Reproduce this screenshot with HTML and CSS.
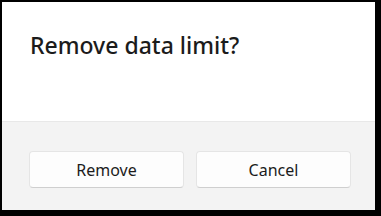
FILE: index.html
```html
<!DOCTYPE html>
<html>
<head>
<meta charset="utf-8">
<link rel="stylesheet" href="styles.css">
</head>
<body>
<div class="dialog">
  <div class="content">
    <h1 class="title">Remove data limit?</h1>
  </div>
  <div class="footer">
    <button class="btn">Remove</button>
    <button class="btn">Cancel</button>
  </div>
</div>
</body>
</html>
```
FILE: styles.css
```css
html, body {
  margin: 0;
  padding: 0;
  background: #000;
  width: 381px;
  height: 216px;
  overflow: hidden;
}
body {
  padding: 2px 6px 6px 2px;
  box-sizing: border-box;
}
.dialog {
  width: 373px;
  height: 208px;
  display: flex;
  flex-direction: column;
  background: #fff;
  font-family: "Noto Sans", "Open Sans", sans-serif;
}
.content {
  height: 119px;
  padding: 28px 0 0 28px;
  box-sizing: border-box;
}
.title {
  margin: 0;
  font-size: 23px;
  font-weight: 500;
  color: #1b1b1b;
  line-height: 30px;
}
.footer {
  flex: 1;
  background: #f3f3f3;
  border-top: 1px solid #e8e8e8;
  display: flex;
  gap: 12px;
  padding: 29px 24px 0 27px;
  box-sizing: border-box;
}
.btn {
  flex: 1;
  height: 37px;
  background: #fdfdfd;
  border: 1px solid #e5e5e5;
  border-bottom-color: #cfcfcf;
  border-radius: 4px;
  font-family: inherit;
  font-size: 16px;
  color: #1b1b1b;
  padding: 0;
}
```
